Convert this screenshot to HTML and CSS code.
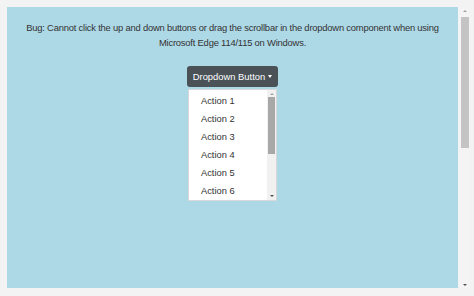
FILE: index.html
```html
<!DOCTYPE html>
<html>
<head>
<meta charset="utf-8">
<link rel="stylesheet" href="styles.css">
</head>
<body>
<div class="frame">
  <div class="panel">
    <p class="note">Bug: Cannot click the up and down buttons or drag the scrollbar in the dropdown component when using Microsoft Edge 114/115 on Windows.</p>
    <div class="dropdown">
      <button class="toggle">Dropdown Button<span class="caret"></span></button>
      <div class="menu">
        <ul class="items">
          <li>Action 1</li>
          <li>Action 2</li>
          <li>Action 3</li>
          <li>Action 4</li>
          <li>Action 5</li>
          <li>Action 6</li>
        </ul>
        <div class="mscroll">
          <span class="arrow up"></span>
          <div class="mtrack"><div class="mthumb"></div></div>
          <span class="arrow down"></span>
        </div>
      </div>
    </div>
  </div>
  <div class="pscroll">
    <span class="arrow up"></span>
    <div class="ptrack"><div class="pthumb"></div></div>
    <span class="arrow down"></span>
  </div>
</div>
</body>
</html>
```
FILE: styles.css
```css
html, body {
  margin: 0;
  padding: 0;
  height: 100%;
  background: #f3f3f3;
  font-family: "Liberation Sans", Arial, sans-serif;
}
.frame {
  display: flex;
  height: 296px;
  box-sizing: border-box;
  padding: 7px 4px 7px 7px;
  gap: 1px;
}
.panel {
  width: 451px;
  height: 281px;
  background: #add8e6;
  display: flex;
  flex-direction: column;
  align-items: center;
}
.note {
  margin: 13px 0 0;
  padding: 0 12px;
  font-size: 9.4px;
  letter-spacing: -0.2px;
  line-height: 15px;
  color: #333;
  text-align: center;
}
.dropdown {
  margin-top: 16px;
  display: flex;
  flex-direction: column;
  align-items: center;
}
.toggle {
  width: 91px;
  height: 21px;
  border: none;
  border-radius: 3px;
  background: #4a5258;
  color: #fff;
  font-family: inherit;
  font-size: 9.4px;
  padding: 0;
  display: flex;
  align-items: center;
  justify-content: center;
  gap: 3px;
}
.caret {
  width: 0;
  height: 0;
  border-left: 2.5px solid transparent;
  border-right: 2.5px solid transparent;
  border-top: 3px solid #fff;
}
.menu {
  margin-top: 2px;
  width: 89px;
  height: 112px;
  background: #fff;
  border: 1px solid #d8d8d8;
  box-sizing: border-box;
  display: flex;
  overflow: hidden;
}
.items {
  list-style: none;
  margin: 0;
  padding: 2px 0 0 12px;
  flex: 1;
  font-size: 9.3px;
  line-height: 18px;
  color: #333;
}
.mscroll, .pscroll {
  display: flex;
  flex-direction: column;
  align-items: center;
  background: #f1f1f1;
}
.mscroll {
  width: 9px;
}
.pscroll {
  width: 11px;
  height: 282px;
  background: #f4f4f4;
}
.arrow {
  width: 0;
  height: 0;
  border-left: 2px solid transparent;
  border-right: 2px solid transparent;
  flex: none;
}
.arrow.up {
  margin: 3px 0 2px;
  border-bottom: 2px solid #a3a3a3;
}
.arrow.down {
  margin: 2px 0 3px;
  border-top: 2px solid #505050;
}
.mtrack, .ptrack {
  flex: 1;
  width: 100%;
  display: flex;
  justify-content: center;
}
.mthumb {
  width: 7px;
  height: 57px;
  background: #a8a8a8;
}
.pthumb {
  width: 8px;
  height: 131px;
  margin-top: 3px;
  background: #c4c4c4;
}
```
